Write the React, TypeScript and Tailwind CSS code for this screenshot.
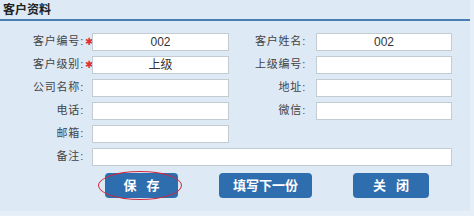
import React from "react";

const font = { fontFamily: '"Liberation Sans", "Noto Sans CJK SC", sans-serif' };

function Label({ text, star }: { text: string; star?: boolean }) {
  return (
    <div className="flex items-center justify-end h-[23px] text-[11px] text-[#444]">
      <span className="tracking-[0.8px]">{text}:</span>
      <span className="w-[8px] text-[10px] text-[#e0303a] leading-none pl-[1px]">{star ? "✱" : ""}</span>
    </div>
  );
}

function Input({ value }: { value?: string }) {
  return (
    <div className="h-[23px] flex items-center">
      <div className="h-[18px] w-full bg-white border border-[#c3cbd3] flex items-center justify-center text-[12px] text-[#333]">
        {value}
      </div>
    </div>
  );
}

function Btn({ children, w }: { children: React.ReactNode; w: string }) {
  return (
    <div className={`${w} h-[25px] rounded-[4px] bg-[#2f6eae] text-white text-[13px] font-bold flex items-center justify-center`}>
      {children}
    </div>
  );
}

export default function App() {
  return (
    <div style={font} className="w-[474px] h-[216px] bg-[#e6eff8] overflow-hidden">
      <div className="w-[470px] h-[211px] bg-[#dde9f5]">
        <div className="h-[19px] flex items-center pl-[3px] text-[12px] font-bold text-[#222]">客户资料</div>
        <div className="h-[2px] bg-[#4a7db3]" />
        <div className="pt-[9px] grid grid-cols-[92px_137px_87px_136px]">
          <Label text="客户编号" star />
          <Input value="002" />
          <div className="pr-[2px]"><Label text="客户姓名" /></div>
          <Input value="002" />

          <Label text="客户级别" star />
          <Input value="上级" />
          <div className="pr-[2px]"><Label text="上级编号" /></div>
          <Input />

          <Label text="公司名称" />
          <Input />
          <div className="pr-[2px]"><Label text="地址" /></div>
          <Input />

          <Label text="电话" />
          <Input />
          <div className="pr-[2px]"><Label text="微信" /></div>
          <Input />

          <Label text="邮箱" />
          <Input />
          <div />
          <div />

          <Label text="备注" />
          <div className="col-span-3"><Input /></div>
        </div>
        <div className="relative flex pl-[105px] pt-[5px] gap-[41px]">
          <Btn w="w-[73px]"><span className="tracking-[10px] pl-[10px]">保存</span></Btn>
          <Btn w="w-[93px]">填写下一份</Btn>
          <Btn w="w-[76px]"><span className="tracking-[10px] pl-[10px]">关闭</span></Btn>
          <div className="absolute left-[98px] top-[3px] w-[84px] h-[29px] rounded-[50%] border-[1.5px] border-[#d0283a]" />
        </div>
      </div>
    </div>
  );
}
